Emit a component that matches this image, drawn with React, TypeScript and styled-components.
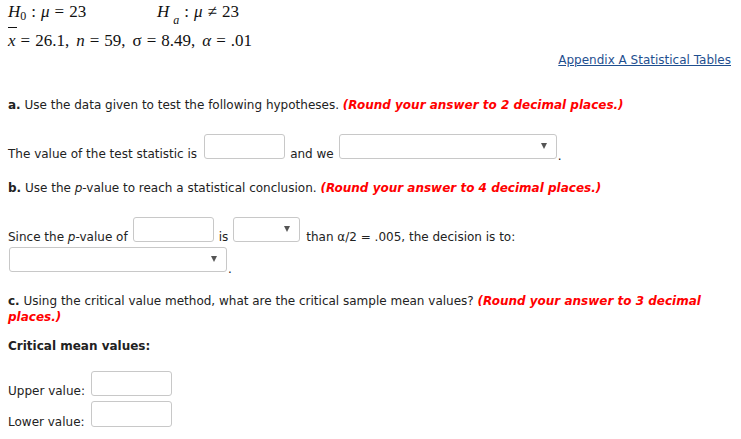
import React from "react";
import styled, { createGlobalStyle } from "styled-components";

const Global = createGlobalStyle`
  html, body { margin: 0; padding: 0; background: #fff; }
  body { font-family: "DejaVu Sans", Verdana, sans-serif; font-size: 12px; color: #222; }
`;

const Page = styled.div`
  width: 741px;
  padding: 0 8px;
  box-sizing: border-box;
`;

const Math = styled.div`
  font-family: "Liberation Serif", "Times New Roman", serif;
  font-size: 17px;
  color: #111;
  line-height: 24px;
`;

const MathLine = styled.div<{ $mt?: number }>`
  display: flex;
  align-items: baseline;
  white-space: pre;
  margin-top: ${(p) => p.$mt ?? 0}px;
`;

const Hyp = styled.span<{ $w?: number }>`
  display: inline-flex;
  align-items: baseline;
  width: ${(p) => (p.$w ? `${p.$w}px` : "auto")};
`;

const I = styled.i``;

const Op = styled.span`
  margin: 0 5px;
`;

const Comma = styled.span`
  margin-right: 7px;
`;

const Sub = styled.span<{ $drop: number; $size?: number; $ml?: number }>`
  font-size: ${(p) => p.$size ?? 12}px;
  position: relative;
  top: ${(p) => p.$drop}px;
  margin-left: ${(p) => p.$ml ?? 0}px;
`;

const Bar = styled.span`
  font-style: italic;
  position: relative;
  &::before {
    content: "";
    position: absolute;
    left: 0;
    right: -1px;
    top: -2px;
    border-top: 1px solid #111;
  }
`;

const LinkRow = styled.div`
  display: flex;
  justify-content: flex-end;
  margin-top: -1px;
  padding-right: 2px;
`;

const Link = styled.a`
  color: #1f4f8f;
  text-decoration: underline;
  font-size: 12px;
  line-height: 16px;
`;

const Heading = styled.div<{ $mt: number }>`
  margin-top: ${(p) => p.$mt}px;
  line-height: 16px;
`;

const Red = styled.span`
  color: #ff0000;
  font-weight: bold;
  font-style: italic;
`;

const Row = styled.div<{ $mt: number }>`
  display: flex;
  align-items: flex-end;
  margin-top: ${(p) => p.$mt}px;
  white-space: pre;
`;

const Label = styled.span<{ $mb?: number }>`
  line-height: 14px;
  margin-bottom: ${(p) => p.$mb ?? -2}px;
`;

const Box = styled.div<{ $w: number; $h?: number; $ml?: number; $mr?: number }>`
  width: ${(p) => p.$w}px;
  height: ${(p) => p.$h ?? 25}px;
  box-sizing: border-box;
  border: 1px solid #c8c8c8;
  border-radius: 3px;
  background: #fff;
  margin-left: ${(p) => p.$ml ?? 5}px;
  margin-right: ${(p) => p.$mr ?? 5}px;
  flex: none;
`;

const Select = styled(Box)`
  position: relative;
  &::after {
    content: "";
    position: absolute;
    right: 9px;
    top: 8px;
    border-left: 3.5px solid transparent;
    border-right: 3.5px solid transparent;
    border-top: 6px solid #555;
  }
`;

const Dot = styled.span`
  line-height: 10px;
  margin-left: -4px;
  margin-bottom: -2px;
`;

const Bold = styled.b``;

const CritTitle = styled.div`
  margin-top: 13px;
  font-weight: bold;
  font-size: 12px;
  line-height: 16px;
`;

const ValueRow = styled.div<{ $mt: number }>`
  display: flex;
  align-items: flex-end;
  margin-top: ${(p) => p.$mt}px;
`;

const P = styled.i`
  font-family: "DejaVu Sans", Verdana, sans-serif;
`;

export default function App() {
  return (
    <Page>
      <Global />
      <Math>
        <MathLine>
          <Hyp $w={149}>
            <I>H</I>
            <Sub $drop={3} $size={12}>0</Sub>
            <Op>:</Op>
            <I>μ</I>
            <Op>=</Op>23
          </Hyp>
          <Hyp>
            <I>H</I>
            <Sub $drop={7} $size={12} $ml={4}>
              <I>a</I>
            </Sub>
            <Op>:</Op>
            <I>μ</I>
            <Op>≠</Op>23
          </Hyp>
        </MathLine>
        <MathLine $mt={4}>
          <Bar>x</Bar>
          <Op>=</Op>26.1<Comma>,</Comma>
          <I>n</I>
          <Op>=</Op>59<Comma>,</Comma>σ<Op>=</Op>8.49<Comma>,</Comma>
          <I>α</I>
          <Op>=</Op>.01
        </MathLine>
      </Math>
      <LinkRow>
        <Link href="#">Appendix A Statistical Tables</Link>
      </LinkRow>
      <Heading $mt={29}>
        <Bold>a.</Bold> Use the data given to test the following hypotheses.{" "}
        <Red>(Round your answer to 2 decimal places.)</Red>
      </Heading>
      <Row $mt={21}>
        <Label>The value of the test statistic is</Label>
        <Box $w={81} $ml={7} />
        <Label>and we</Label>
        <Select $w={218} $ml={5} />
        <Dot>.</Dot>
      </Row>
      <Heading $mt={21}>
        <Bold>b.</Bold> Use the <P>p</P>-value to reach a statistical conclusion.{" "}
        <Red>(Round your answer to 4 decimal places.)</Red>
      </Heading>
      <Row $mt={21}>
        <Label>
          Since the <P>p</P>-value of
        </Label>
        <Box $w={81} $ml={5} />
        <Label>is</Label>
        <Select $w={67} $ml={5} $mr={6} />
        <Label>than α/2 = .005, the decision is to:</Label>
      </Row>
      <Row $mt={5}>
        <Select $w={218} $ml={1} $mr={5} />
        <Dot>.</Dot>
      </Row>
      <Heading $mt={21}>
        <Bold>c.</Bold> Using the critical value method, what are the critical sample mean values?{" "}
        <Red>(Round your answer to 3 decimal</Red> <Red>places.)</Red>
      </Heading>
      <CritTitle>Critical mean values:</CritTitle>
      <ValueRow $mt={17}>
        <Label>Upper value:</Label>
        <Box $w={81} $ml={6} />
      </ValueRow>
      <ValueRow $mt={5}>
        <Label>Lower value:</Label>
        <Box $w={81} $h={26} $ml={6} />
      </ValueRow>
    </Page>
  );
}
